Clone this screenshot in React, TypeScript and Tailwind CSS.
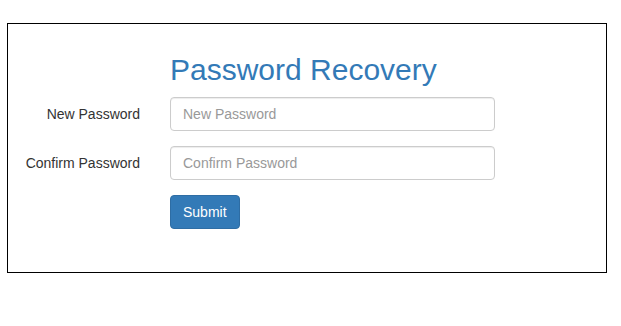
export default function App() {
  return (
    <div className="min-h-[326px] w-[621px] bg-white pt-[23px] pl-[7px] font-['Liberation_Sans',Arial,sans-serif] text-[14px] text-[#333]">
      <div className="box-border h-[250px] w-[600px] border border-black pt-[29px]">
        <div className="flex">
          <div className="w-[162px] shrink-0" />
          <h2 className="m-0 text-[30px] leading-[33px] font-normal text-[#337ab7]">Password Recovery</h2>
        </div>
        <div className="mt-[11px] flex flex-col gap-[15px]">
          <div className="flex items-center">
            <label className="w-[132px] shrink-0 text-right leading-[20px]">New Password</label>
            <div className="w-[30px] shrink-0" />
            <input
              type="password"
              placeholder="New Password"
              className="box-border h-[34px] w-[325px] rounded-[4px] border border-[#ccc] px-[12px] py-[6px] text-[14px] text-[#555] shadow-[inset_0_1px_1px_rgba(0,0,0,0.075)] outline-none placeholder:text-[#999]"
            />
          </div>
          <div className="flex items-center">
            <label className="w-[132px] shrink-0 text-right leading-[20px]">Confirm Password</label>
            <div className="w-[30px] shrink-0" />
            <input
              type="password"
              placeholder="Confirm Password"
              className="box-border h-[34px] w-[325px] rounded-[4px] border border-[#ccc] px-[12px] py-[6px] text-[14px] text-[#555] shadow-[inset_0_1px_1px_rgba(0,0,0,0.075)] outline-none placeholder:text-[#999]"
            />
          </div>
          <div className="flex">
            <div className="w-[162px] shrink-0" />
            <button className="box-border h-[34px] rounded-[4px] border border-[#2e6da4] bg-[#337ab7] px-[12px] py-[6px] text-[14px] leading-[20px] text-white">
              Submit
            </button>
          </div>
        </div>
      </div>
    </div>
  );
}
